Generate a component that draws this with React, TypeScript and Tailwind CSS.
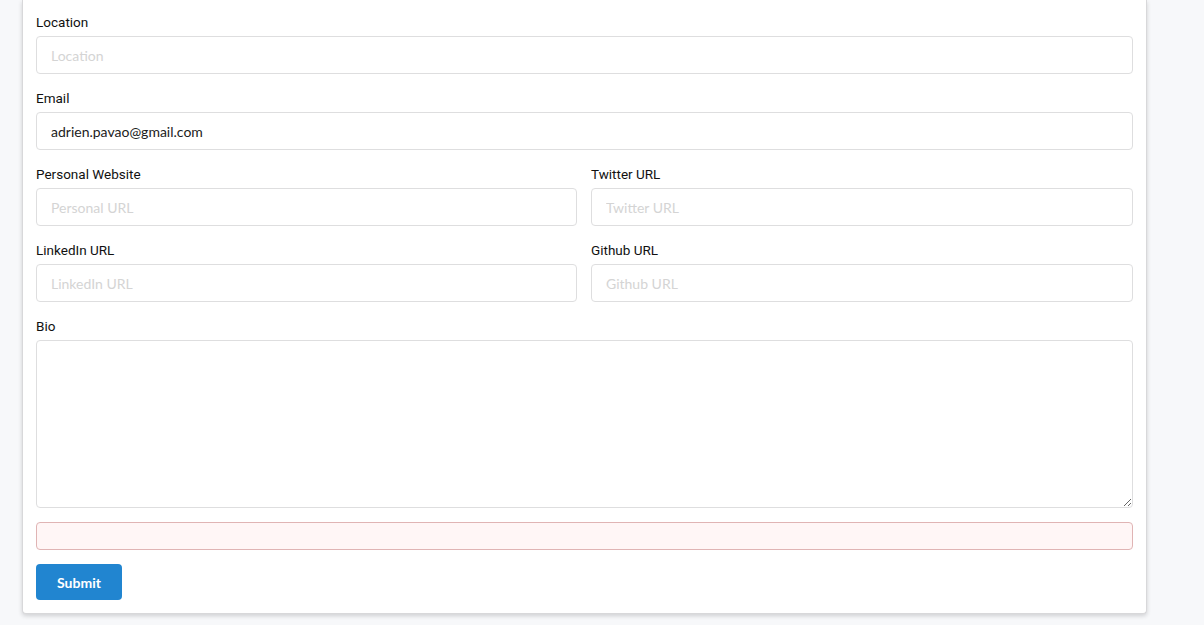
const inputCls =
  "h-[38px] w-full rounded-[4px] border border-[#dededf] bg-white px-[14px] text-[14px] text-[#212121] outline-none placeholder:text-[#d4d4d4] [font-family:Lato,'Liberation_Sans',sans-serif]";

const labelCls =
  "mb-[6px] h-[16px] text-[13.5px] leading-[17px] font-normal text-[#111] [font-family:Roboto,'Liberation_Sans',sans-serif]";

function Field({ label, placeholder, value }: { label: string; placeholder?: string; value?: string }) {
  return (
    <div className="flex flex-col">
      <label className={labelCls}>{label}</label>
      <input className={inputCls} placeholder={placeholder} defaultValue={value} />
    </div>
  );
}

export default function App() {
  return (
    <div className="min-h-[625px] bg-[#f7f8fa] pl-[22px] pr-[57px]">
      <div className="flex flex-col gap-[16px] rounded-b-[4px] border-x border-b border-[#d8d8da] bg-white px-[13px] pt-[14px] pb-[13px] shadow-[0_2px_4px_rgba(34,36,38,0.18)]">
        <Field label="Location" placeholder="Location" />
        <Field label="Email" value="adrien.pavao@gmail.com" />
        <div className="grid grid-cols-[541px_1fr] gap-[14px]">
          <Field label="Personal Website" placeholder="Personal URL" />
          <Field label="Twitter URL" placeholder="Twitter URL" />
        </div>
        <div className="grid grid-cols-[541px_1fr] gap-[14px]">
          <Field label="LinkedIn URL" placeholder="LinkedIn URL" />
          <Field label="Github URL" placeholder="Github URL" />
        </div>
        <div className="flex flex-col">
          <label className={labelCls}>Bio</label>
          <textarea className="h-[168px] w-full resize-y rounded-[4px] border border-[#dededf] bg-white px-[14px] py-[10px] text-[14px] outline-none [font-family:Lato,'Liberation_Sans',sans-serif]" />
          <div className="mt-[14px] h-[28px] rounded-[4px] border border-[#e0b4b4] bg-[#fff6f6]" />
          <button className="mt-[14px] h-[36px] w-[86px] rounded-[4px] bg-[#2185d0] text-[14px] font-bold text-white [font-family:Lato,'Liberation_Sans',sans-serif]">
            Submit
          </button>
        </div>
      </div>
    </div>
  );
}
